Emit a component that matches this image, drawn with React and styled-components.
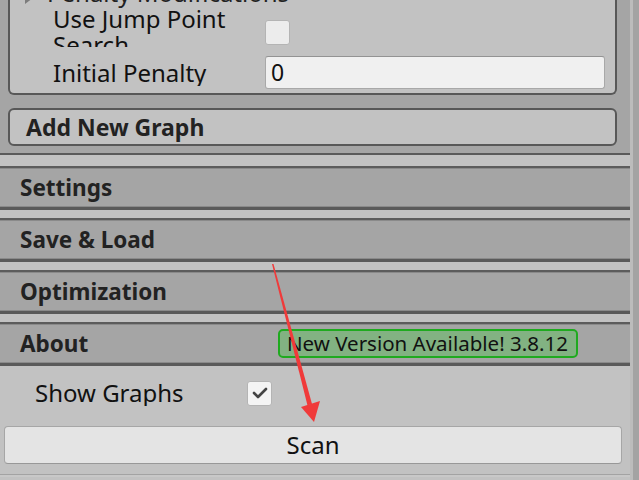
import styled, { createGlobalStyle } from "styled-components";

const GlobalStyle = createGlobalStyle`
    html, body {
        margin : 0;
        padding : 0;
        background : #c2c2c2;
    }
    body {
        font-family : "Noto Sans", "Open Sans", sans-serif;
        color : #111;
    }
`

const Viewport = styled.div`
    position : relative;
    width : 639px;
    height : 480px;
    overflow : hidden;
    display : flex;
    flex-direction : row;
`

const Main = styled.div`
    width : 630px;
    display : flex;
    flex-direction : column;
    background : #c2c2c2;
`

const Scrollbar = styled.div`
    width : 6px;
    border-left : 3px solid #bcbcbc;
    background : #a3a3a3;
`

const GraphArea = styled.div`
    margin-top : -19px;
    background : #a5a5a5;
    padding : 0 13px 7px 8px;
    border-bottom : 2px solid #5a5a5a;
    display : flex;
    flex-direction : column;
`

const GraphBox = styled.div`
    background : #c2c2c2;
    border : 2px solid #585858;
    border-top : none;
    border-radius : 0 0 6px 6px;
    padding-bottom : 2px;
    display : flex;
    flex-direction : column;
`

const FoldRow = styled.div`
    height : 24px;
    line-height : 23px;
    font-size : 24px;
    display : flex;
    align-items : flex-start;
    padding-left : 15px;
    color : #222;
`

const Triangle = styled.span`
    width : 0;
    height : 0;
    margin : 11px 14px 0 0;
    border-left : 8px solid #7c7c7c;
    border-top : 6px solid transparent;
    border-bottom : 6px solid transparent;
`

const FieldRow = styled.div`
    display : flex;
    align-items : ${({ $align }) => $align || "center"};
    height : ${({ $height }) => $height}px;
    margin-top : ${({ $gap }) => $gap || 0}px;
    padding-left : ${({ $indent }) => $indent}px;
    padding-right : 10px;
`

const FieldLabel = styled.div`
    width : ${({ $width }) => $width}px;
    flex-shrink : 0;
    font-size : 24px;
    line-height : 26px;
    max-height : ${({ $clip }) => $clip ? `${$clip}px` : "none"};
    overflow : hidden;
    white-space : ${({ $clip }) => $clip ? "normal" : "nowrap"};
`

const Checkbox = styled.div`
    width : 23px;
    height : 23px;
    margin-bottom : ${({ $drop }) => $drop || 0}px;
    border : 1px solid #b4b4b4;
    border-radius : 3px;
    background : ${({ $checked }) => $checked ? "#f4f4f4" : "#ececec"};
    display : flex;
    align-items : center;
    justify-content : center;
`

const NumberInput = styled.div`
    flex : 1;
    height : 31px;
    border : 1px solid #a8a8a8;
    border-top-color : #939393;
    border-radius : 3px;
    background : #f0f0f0;
    font-size : 23px;
    line-height : 31px;
    padding-left : 5px;
`

const AddButton = styled.div`
    margin-top : 13px;
    height : 34px;
    border : 2px solid #585858;
    border-radius : 6px;
    background : #c2c2c2;
    font-size : 23px;
    font-weight : 700;
    line-height : 34px;
    padding-left : 16px;
    color : #222;
`

const Section = styled.div`
    margin-top : ${({ $first }) => $first ? 11 : 8}px;
    height : 39px;
    background : #a5a5a5;
    border-top : 2px solid #5c5c5c;
    border-bottom : 3px solid #5a5a5a;
    box-shadow : inset 0 1px 0 #8a8a8a, inset 0 -1px 0 #8a8a8a;
    display : flex;
    align-items : center;
    padding-left : 20px;
`

const SectionTitle = styled.div`
    width : 258px;
    font-size : 22.5px;
    font-weight : 700;
    color : #222;
`

const VersionBadge = styled.div`
    width : 289px;
    height : 25px;
    border : 2px solid #1faa1f;
    border-radius : 5px;
    background : #82b282;
    font-size : 20.5px;
    line-height : 25px;
    padding-left : 7px;
    color : #111;
    white-space : nowrap;
`

const Footer = styled.div`
    display : flex;
    flex-direction : column;
    padding-top : 13px;
`

const ScanButton = styled.div`
    margin : 19px 8px 0 4px;
    height : 36px;
    border : 1px solid #a6a6a6;
    border-bottom-color : #989898;
    border-radius : 4px;
    background : #e4e4e4;
    font-size : 24px;
    line-height : 36px;
    text-align : center;
    color : #111;
`

const BottomEdge = styled.div`
    margin-top : 10px;
    height : 2px;
    border-top : 1px solid #a3a3a3;
    background : #c8c8c8;
`

const Overlay = styled.svg`
    position : absolute;
    top : 0;
    left : 0;
    pointer-events : none;
`

const sections = ["Settings", "Save & Load", "Optimization"];

function CheckMark() {
    return (
        <svg width="16" height="14" viewBox="0 0 16 14">
            <polyline points="2,7 6,11 14,3" fill="none" stroke="#444" strokeWidth="2.6" strokeLinecap="round" strokeLinejoin="round" />
        </svg>
    )
}

function App() {
    return (
        <>
            <GlobalStyle />
            <Viewport>
                <Main>
                    <GraphArea>
                        <GraphBox>
                            <FoldRow><Triangle />Penalty Modifications</FoldRow>
                            <FieldRow $height={42} $indent={43} $align="flex-end">
                                <FieldLabel $width={212} $clip={41}>Use Jump Point Search</FieldLabel>
                                <Checkbox $drop={2} />
                            </FieldRow>
                            <FieldRow $height={37} $indent={43} $gap={7}>
                                <FieldLabel $width={212}>Initial Penalty</FieldLabel>
                                <NumberInput>0</NumberInput>
                            </FieldRow>
                        </GraphBox>
                        <AddButton>Add New Graph</AddButton>
                    </GraphArea>
                    {sections.map((title, index) => (
                        <Section key={`section-${index}`} $first={index === 0}>
                            <SectionTitle>{title}</SectionTitle>
                        </Section>
                    ))}
                    <Section>
                        <SectionTitle>About</SectionTitle>
                        <VersionBadge>New Version Available! 3.8.12</VersionBadge>
                    </Section>
                    <Footer>
                        <FieldRow $height={28} $indent={35}>
                            <FieldLabel $width={212}>Show Graphs</FieldLabel>
                            <Checkbox $checked><CheckMark /></Checkbox>
                        </FieldRow>
                        <ScanButton>Scan</ScanButton>
                        <BottomEdge />
                    </Footer>
                </Main>
                <Scrollbar />
                <Overlay width="639" height="480" viewBox="0 0 639 480">
                    <polygon points="272,264 273.5,264 312,404 307.5,405.5" fill="#f03a3a" />
                    <polygon points="301,407 320,401 314,422" fill="#f03a3a" />
                </Overlay>
            </Viewport>
        </>
    )
}

export default App;
